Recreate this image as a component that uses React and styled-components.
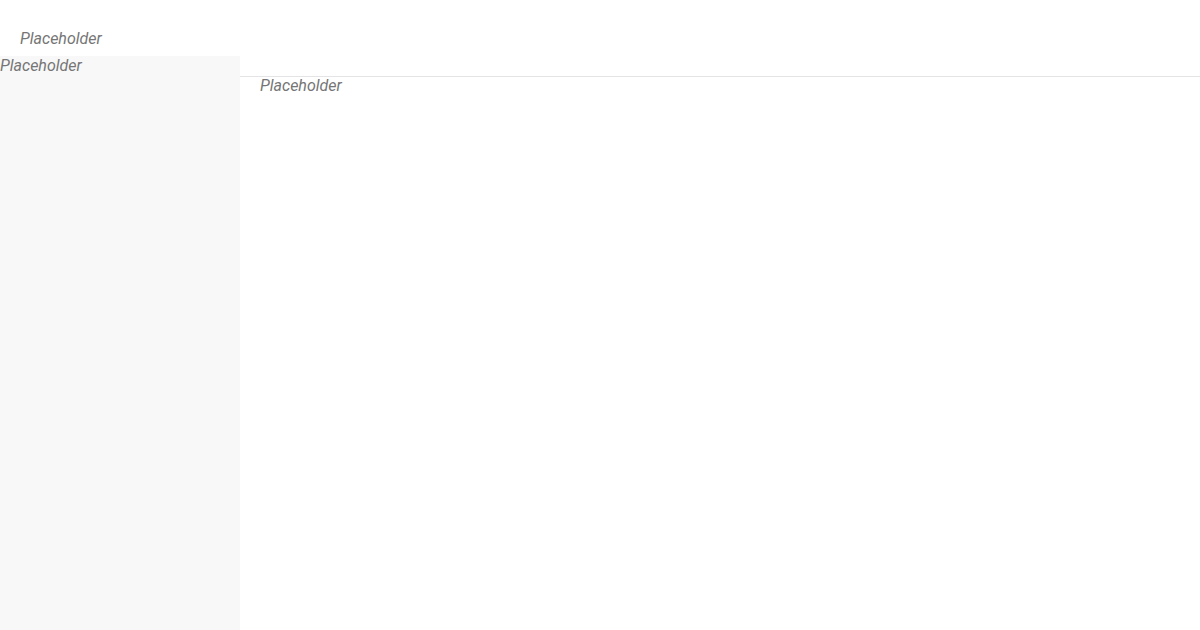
import styled, { createGlobalStyle } from 'styled-components';

const GlobalStyle = createGlobalStyle`
  html, body {
    margin: 0;
    padding: 0;
    background: #ffffff;
    font-family: Roboto, "Liberation Sans", sans-serif;
  }
`;

const Page = styled.div`
  display: flex;
  flex-direction: column;
  width: 1200px;
  height: 630px;
  overflow: hidden;
`;

const Header = styled.header`
  box-sizing: border-box;
  height: 56px;
  padding: 29px 20px 0;
`;

const Body = styled.div`
  display: flex;
  flex: 1;
  min-height: 0;
`;

const Sidebar = styled.aside`
  width: 240px;
  flex-shrink: 0;
  background: #f8f8f8;
`;

const Main = styled.main`
  flex: 1;
  display: flex;
  flex-direction: column;
`;

const Toolbar = styled.div`
  box-sizing: border-box;
  height: 21px;
  border-bottom: 1px solid #e4e4e7;
`;

const Content = styled.div`
  padding: 0 20px;
`;

const Placeholder = styled.span`
  display: block;
  font-size: 16px;
  font-style: italic;
  line-height: ${(p) => (p.$tight ? '18px' : '19px')};
  color: #757575;
`;

export default function App() {
  return (
    <Page>
      <GlobalStyle />
      <Header>
        <Placeholder>Placeholder</Placeholder>
      </Header>
      <Body>
        <Sidebar>
          <Placeholder>Placeholder</Placeholder>
        </Sidebar>
        <Main>
          <Toolbar />
          <Content>
            <Placeholder $tight>Placeholder</Placeholder>
          </Content>
        </Main>
      </Body>
    </Page>
  );
}
